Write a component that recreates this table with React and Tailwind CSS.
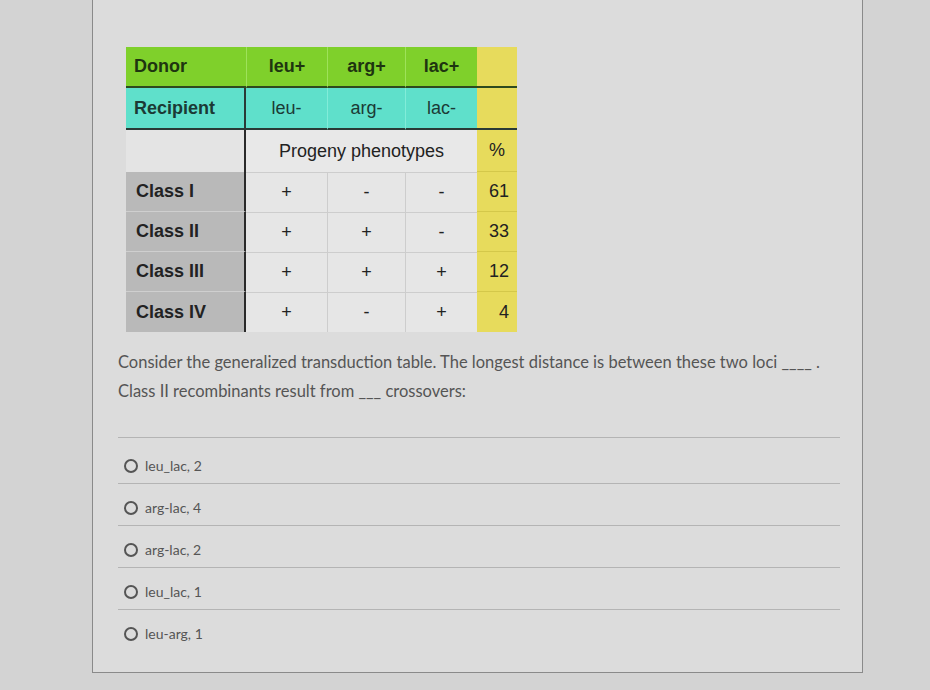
export default function App() {
  const rows = [
    ["Class I", "+", "-", "-", "61"],
    ["Class II", "+", "+", "-", "33"],
    ["Class III", "+", "+", "+", "12"],
    ["Class IV", "+", "-", "+", "4"],
  ];
  const options = ["leu_lac, 2", "arg-lac, 4", "arg-lac, 2", "leu_lac, 1", "leu-arg, 1"];
  const cell = "flex items-center justify-center";
  return (
    <div className="w-[930px] h-[690px] bg-[#d3d3d3] pl-[92px] overflow-hidden" style={{ fontFamily: "Lato, 'Open Sans', sans-serif" }}>
      <div className="w-[771px] h-[673px] bg-[#dcdcdc] border border-t-0 border-[#8a8a8a] pl-[33px] pt-[47px] flex flex-col">
        <div
          className="grid grid-cols-[120px_81px_78px_72px_40px] grid-rows-[41px_42px_42px_40px_40px_40px_40px] w-[391px] text-[18px] text-[#222]"
          style={{ fontFamily: "'Liberation Sans', Arial, sans-serif" }}
        >
          {/* Donor row */}
          <div className="bg-[#7fd02b] border-b-2 border-[#2e4a1e] flex items-center pl-2 font-bold text-[#1e3510]">Donor</div>
          <div className={`bg-[#7fd02b] border-b-2 border-l border-l-[#9ee25a] border-[#2e4a1e] ${cell} font-bold text-[#1e3510]`}>leu+</div>
          <div className={`bg-[#7fd02b] border-b-2 border-l border-l-[#9ee25a] border-[#2e4a1e] ${cell} font-bold text-[#1e3510]`}>arg+</div>
          <div className={`bg-[#7fd02b] border-b-2 border-l border-l-[#9ee25a] border-[#2e4a1e] ${cell} font-bold text-[#1e3510]`}>lac+</div>
          <div className="bg-[#e7db5c] border-b-2 border-[#2e4a1e]"></div>
          {/* Recipient row */}
          <div className="bg-[#5fe0cb] border-b-2 border-r-2 border-[#2a3a36] flex items-center pl-2 font-bold text-[#1b3a35]">Recipient</div>
          <div className={`bg-[#5fe0cb] border-b-2 border-[#2a3a36] ${cell} text-[#1b3a35]`}>leu-</div>
          <div className={`bg-[#5fe0cb] border-b-2 border-l border-l-[#82ecd9] border-[#2a3a36] ${cell} text-[#1b3a35]`}>arg-</div>
          <div className={`bg-[#5fe0cb] border-b-2 border-l border-l-[#82ecd9] border-[#2a3a36] ${cell} text-[#1b3a35]`}>lac-</div>
          <div className="bg-[#e7db5c] border-b-2 border-[#2a3a36]"></div>
          {/* Progeny row */}
          <div className="bg-[#e4e4e4] border-r-2 border-[#2a2a2a]"></div>
          <div className={`col-span-3 bg-[#e8e8e8] ${cell} text-[#222]`}>Progeny phenotypes</div>
          <div className={`bg-[#e7db5c] ${cell} border-b border-[#d4c84a]`}>%</div>
          {rows.map((r, i) => (
            <div key={i} className="contents">
              <div className={`bg-[#b9b9b9] border-r-2 border-[#2a2a2a] flex items-center pl-[10px] font-bold text-[#222] ${i < 3 ? "border-b border-b-[#cfcfcf]" : ""}`}>{r[0]}</div>
              <div className={`bg-[#e6e6e6] ${cell} border-t border-[#cdcdcd]`}>{r[1]}</div>
              <div className={`bg-[#e6e6e6] ${cell} border-t border-l border-[#cdcdcd]`}>{r[2]}</div>
              <div className={`bg-[#e6e6e6] ${cell} border-t border-l border-[#cdcdcd]`}>{r[3]}</div>
              <div className={`bg-[#e7db5c] flex items-center justify-end pr-2 ${i < 3 ? "border-b border-[#d4c84a]" : ""}`}>{r[4]}</div>
            </div>
          ))}
        </div>

        <div className="ml-[-8px] mt-[16px] text-[16.5px] leading-[29px] text-[#555]">
          <p>Consider the generalized transduction table. The longest distance is between these two loci ____ .</p>
          <p>Class II recombinants result from ___ crossovers:</p>
        </div>

        <div className="ml-[-8px] mt-[31px] w-[722px] border-t border-[#b4b4b4]">
          {options.map((o, i) => (
            <div key={i} className={`flex items-start pl-[6px] ${i === 0 ? "h-[46px] pt-[20px]" : "h-[42px] pt-[16px]"} ${i < 4 ? "border-b border-[#b4b4b4]" : ""}`}>
              <span className="w-[14px] h-[14px] rounded-full border-2 border-[#555] mr-[7px] mt-[1px]"></span>
              <span className="text-[14px] leading-[16px] text-[#555]">{o}</span>
            </div>
          ))}
        </div>
      </div>
    </div>
  );
}
